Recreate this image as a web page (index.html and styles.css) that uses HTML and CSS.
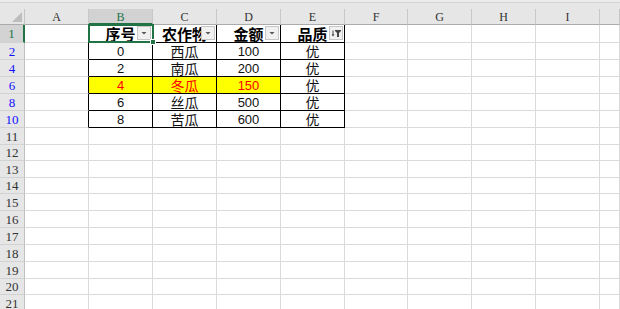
FILE: index.html
```html
<!DOCTYPE html>
<html lang="zh">
<head>
<meta charset="utf-8">
<title>Sheet</title>
<link rel="stylesheet" href="styles.css">
</head>
<body>
<div class="sheet">
  <div class="topbar"></div>
  <div class="row hdr">
    <div class="corner"><span class="tri"></span></div>
    <div class="ch w64">A</div>
    <div class="ch w64 csel">B</div>
    <div class="ch w64">C</div>
    <div class="ch w64">D</div>
    <div class="ch w64">E</div>
    <div class="ch w63">F</div>
    <div class="ch w64">G</div>
    <div class="ch w64">H</div>
    <div class="ch w64">I</div>
    <div class="ch wf"></div>
  </div>

  <div class="row h18">
    <div class="rh rsel">1</div>
    <div class="cell w64 tl"></div>
    <div class="cell w64 tb th">序号<span class="fbtn"><svg width="14" height="14" viewBox="0 0 14 14"><polygon points="4.5,6 9.5,6 7,8.5" fill="#555"/></svg></span><span class="selbox"><span class="handle"></span></span></div>
    <div class="cell w64 tb th">农作物<span class="fbtn"><svg width="14" height="14" viewBox="0 0 14 14"><polygon points="4.5,6 9.5,6 7,8.5" fill="#555"/></svg></span></div>
    <div class="cell w64 tb th">金额<span class="fbtn"><svg width="14" height="14" viewBox="0 0 14 14"><polygon points="4.5,6 9.5,6 7,8.5" fill="#555"/></svg></span></div>
    <div class="cell w64 tb th">品质<span class="fbtn"><svg width="14" height="14" viewBox="0 0 14 14"><path d="M4 4.5 V9" stroke="#444" stroke-width="1"/><polygon points="2.5,8.5 5.5,8.5 4,10.5" fill="#444"/><polygon points="6,4 12,4 12,5 10,7 10,11 8,11 8,7 6,5" fill="#444"/></svg></span></div>
    <div class="cell w63"></div>
    <div class="cell w64"></div>
    <div class="cell w64"></div>
    <div class="cell w64"></div>
    <div class="cell wf"></div>
  </div>

  <div class="row h17">
    <div class="rh f">2</div>
    <div class="cell w64 tl"></div>
    <div class="cell w64 tb">0</div>
    <div class="cell w64 tb cjk">西瓜</div>
    <div class="cell w64 tb">100</div>
    <div class="cell w64 tb cjk">优</div>
    <div class="cell w63"></div><div class="cell w64"></div><div class="cell w64"></div><div class="cell w64"></div><div class="cell wf"></div>
  </div>

  <div class="row h17">
    <div class="rh f">4</div>
    <div class="cell w64 tl"></div>
    <div class="cell w64 tb">2</div>
    <div class="cell w64 tb cjk">南瓜</div>
    <div class="cell w64 tb">200</div>
    <div class="cell w64 tb cjk">优</div>
    <div class="cell w63"></div><div class="cell w64"></div><div class="cell w64"></div><div class="cell w64"></div><div class="cell wf"></div>
  </div>

  <div class="row h17">
    <div class="rh f">6</div>
    <div class="cell w64 tl"></div>
    <div class="cell w64 tb hl">4</div>
    <div class="cell w64 tb hl cjk">冬瓜</div>
    <div class="cell w64 tb hl">150</div>
    <div class="cell w64 tb cjk">优</div>
    <div class="cell w63"></div><div class="cell w64"></div><div class="cell w64"></div><div class="cell w64"></div><div class="cell wf"></div>
  </div>

  <div class="row h17">
    <div class="rh f">8</div>
    <div class="cell w64 tl"></div>
    <div class="cell w64 tb">6</div>
    <div class="cell w64 tb cjk">丝瓜</div>
    <div class="cell w64 tb">500</div>
    <div class="cell w64 tb cjk">优</div>
    <div class="cell w63"></div><div class="cell w64"></div><div class="cell w64"></div><div class="cell w64"></div><div class="cell wf"></div>
  </div>

  <div class="row h17">
    <div class="rh f">10</div>
    <div class="cell w64 tl"></div>
    <div class="cell w64 tb">8</div>
    <div class="cell w64 tb cjk">苦瓜</div>
    <div class="cell w64 tb">600</div>
    <div class="cell w64 tb cjk">优</div>
    <div class="cell w63"></div><div class="cell w64"></div><div class="cell w64"></div><div class="cell w64"></div><div class="cell wf"></div>
  </div>

  <div class="row h17"><div class="rh">11</div><div class="cell w64"></div><div class="cell w64"></div><div class="cell w64"></div><div class="cell w64"></div><div class="cell w64"></div><div class="cell w63"></div><div class="cell w64"></div><div class="cell w64"></div><div class="cell w64"></div><div class="cell wf"></div></div>
  <div class="row h16"><div class="rh">12</div><div class="cell w64"></div><div class="cell w64"></div><div class="cell w64"></div><div class="cell w64"></div><div class="cell w64"></div><div class="cell w63"></div><div class="cell w64"></div><div class="cell w64"></div><div class="cell w64"></div><div class="cell wf"></div></div>
  <div class="row h17"><div class="rh">13</div><div class="cell w64"></div><div class="cell w64"></div><div class="cell w64"></div><div class="cell w64"></div><div class="cell w64"></div><div class="cell w63"></div><div class="cell w64"></div><div class="cell w64"></div><div class="cell w64"></div><div class="cell wf"></div></div>
  <div class="row h16"><div class="rh">14</div><div class="cell w64"></div><div class="cell w64"></div><div class="cell w64"></div><div class="cell w64"></div><div class="cell w64"></div><div class="cell w63"></div><div class="cell w64"></div><div class="cell w64"></div><div class="cell w64"></div><div class="cell wf"></div></div>
  <div class="row h17"><div class="rh">15</div><div class="cell w64"></div><div class="cell w64"></div><div class="cell w64"></div><div class="cell w64"></div><div class="cell w64"></div><div class="cell w63"></div><div class="cell w64"></div><div class="cell w64"></div><div class="cell w64"></div><div class="cell wf"></div></div>
  <div class="row h17"><div class="rh">16</div><div class="cell w64"></div><div class="cell w64"></div><div class="cell w64"></div><div class="cell w64"></div><div class="cell w64"></div><div class="cell w63"></div><div class="cell w64"></div><div class="cell w64"></div><div class="cell w64"></div><div class="cell wf"></div></div>
  <div class="row h17"><div class="rh">17</div><div class="cell w64"></div><div class="cell w64"></div><div class="cell w64"></div><div class="cell w64"></div><div class="cell w64"></div><div class="cell w63"></div><div class="cell w64"></div><div class="cell w64"></div><div class="cell w64"></div><div class="cell wf"></div></div>
  <div class="row h17"><div class="rh">18</div><div class="cell w64"></div><div class="cell w64"></div><div class="cell w64"></div><div class="cell w64"></div><div class="cell w64"></div><div class="cell w63"></div><div class="cell w64"></div><div class="cell w64"></div><div class="cell w64"></div><div class="cell wf"></div></div>
  <div class="row h17"><div class="rh">19</div><div class="cell w64"></div><div class="cell w64"></div><div class="cell w64"></div><div class="cell w64"></div><div class="cell w64"></div><div class="cell w63"></div><div class="cell w64"></div><div class="cell w64"></div><div class="cell w64"></div><div class="cell wf"></div></div>
  <div class="row h16"><div class="rh">20</div><div class="cell w64"></div><div class="cell w64"></div><div class="cell w64"></div><div class="cell w64"></div><div class="cell w64"></div><div class="cell w63"></div><div class="cell w64"></div><div class="cell w64"></div><div class="cell w64"></div><div class="cell wf"></div></div>
  <div class="row h17"><div class="rh">21</div><div class="cell w64"></div><div class="cell w64"></div><div class="cell w64"></div><div class="cell w64"></div><div class="cell w64"></div><div class="cell w63"></div><div class="cell w64"></div><div class="cell w64"></div><div class="cell w64"></div><div class="cell wf"></div></div>
</div>
</body>
</html>
```

FILE: styles.css
```css
* { box-sizing: border-box; margin: 0; padding: 0; }
html, body { width: 620px; height: 309px; overflow: hidden; background: #fff; }
body { font-family: "Liberation Sans", "Noto Sans CJK SC", sans-serif; }

.sheet { display: flex; flex-direction: column; width: 620px; }

.topbar {
  height: 9px;
  flex: none;
  background: linear-gradient(#ebebeb 0 2px, #d4d4d4 2px 3px, #e6e6e6 3px);
}

.row { display: flex; flex: none; }
.hdr { height: 16px; background: #e6e6e6; }
.h18 { height: 18px; }
.h17 { height: 17px; }
.h16 { height: 16px; }

.w64 { width: 64px; flex: none; }
.w63 { width: 63px; flex: none; }
.wf { flex: 1; }

.corner {
  width: 25px;
  flex: none;
  border-right: 1px solid #c4c4c4;
  border-bottom: 1px solid #ababab;
  display: flex;
  align-items: flex-end;
  justify-content: flex-end;
  padding: 0 2px 2px 0;
}
.tri {
  width: 0;
  height: 0;
  border-left: 10px solid transparent;
  border-bottom: 10px solid #bdbdbd;
}

.ch {
  border-right: 1px solid #c8c8c8;
  border-bottom: 1px solid #ababab;
  display: flex;
  align-items: flex-end;
  justify-content: center;
  padding-bottom: 1px;
  font-family: "Liberation Serif", serif;
  font-size: 12px;
  line-height: 1;
  color: #333;
}
.ch.csel {
  background: #d2d2d2;
  border-bottom: 2px solid #217346;
  color: #217346;
  padding-bottom: 0;
}

.rh {
  width: 25px;
  flex: none;
  background: #e6e6e6;
  border-right: 1px solid #c0c0c0;
  border-bottom: 1px solid #d2d2d2;
  display: flex;
  align-items: center;
  justify-content: center;
  font-family: "Liberation Serif", serif;
  font-size: 13px;
  line-height: 1;
  color: #333;
}
.rh.f { color: #1010ff; }
.rh.rsel {
  background: #d3d3d3;
  color: #217346;
  border-right: 2px solid #217346;
}

.cell {
  border-right: 1px solid #dadada;
  border-bottom: 1px solid #dadada;
  display: flex;
  align-items: center;
  justify-content: center;
  position: relative;
  white-space: nowrap;
  font-size: 13px;
  line-height: 1;
  color: #111;
}
.cell.tl { border-right-color: #000; }
.cell.tb { border-right-color: #000; border-bottom-color: #000; }
.cell.cjk { font-family: "Noto Sans CJK SC", sans-serif; font-size: 14px; }
.cell.th {
  font-family: "Noto Sans CJK SC", sans-serif;
  font-size: 15px;
  font-weight: bold;
  color: #000;
}
.cell.hl { background: #ffff00; color: #ff0000; }

.fbtn {
  position: absolute;
  right: 1px;
  top: 1px;
  width: 14px;
  height: 14px;
  background: #f0f0f0;
  border: 1px solid #c6c6c6;
  display: flex;
  align-items: center;
  justify-content: center;
}
.fbtn svg { display: block; flex: none; }

.selbox {
  position: absolute;
  left: -1px;
  top: -1px;
  width: 66px;
  height: 19px;
  border: 2px solid #217346;
  z-index: 2;
}
.handle {
  position: absolute;
  right: -4px;
  bottom: -4px;
  width: 6px;
  height: 6px;
  background: #217346;
  border: 1px solid #fff;
}
```
